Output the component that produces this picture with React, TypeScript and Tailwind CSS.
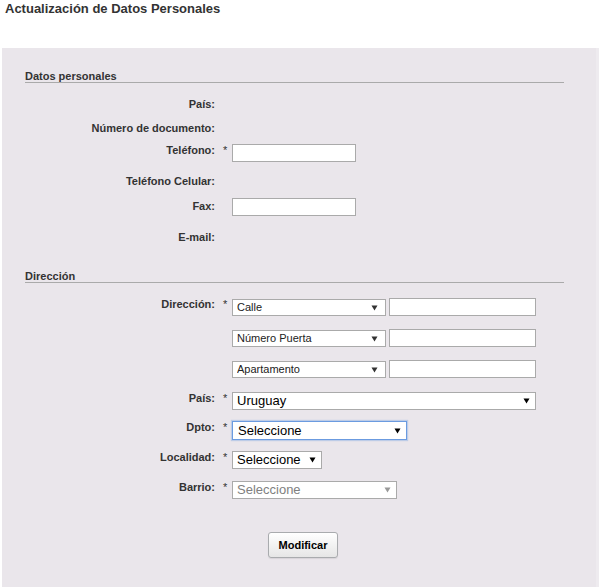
import React from 'react';

type RowProps = {
  label?: string;
  req?: boolean;
  className?: string;
  labelClass?: string;
  children?: React.ReactNode;
};

function Row({ label = '', req = false, className = '', labelClass = '', children }: RowProps) {
  return (
    <div className={`flex items-start ${className}`}>
      <div className={`w-[190px] text-right text-[11px] font-bold leading-[12px] ${labelClass}`}>{label}</div>
      <div className="w-[17px] pl-[8px] text-[11px] leading-[12px]">{req ? '*' : ''}</div>
      <div className="flex items-start gap-[3px]">{children}</div>
    </div>
  );
}

function Arrow({ className = '' }: { className?: string }) {
  return (
    <svg
      width="7"
      height="6"
      viewBox="0 0 7 6"
      className={`pointer-events-none absolute top-1/2 -translate-y-1/2 ${className}`}
    >
      <polygon points="0.5,0.5 6.5,0.5 3.5,5.5" fill="currentColor" />
    </svg>
  );
}

export default function App() {
  return (
    <div className="h-[587px] overflow-hidden bg-white font-['Liberation_Sans',Arial,sans-serif] text-[#333]">
      <h1 className="pl-[5px] pt-[1px] text-[13px] font-bold leading-[16px]">Actualización de Datos Personales</h1>

      <div className="ml-[2px] mt-[31px] h-[539px] w-[597px] border-r-[3px] border-r-[#eeebef] bg-[#eae6eb] pl-[23px] pt-[22px]">
        {/* Datos personales */}
        <div className="w-[539px] border-b border-[#aaa] text-[11px] font-bold leading-[12px]">Datos personales</div>

        <Row label="País:" className="mt-[15px]" />
        <Row label="Número de documento:" className="mt-[12px]" />
        <Row label="Teléfono:" req className="mt-[10px]">
          <input type="text" className="block h-[18px] w-[124px] border border-[#aaa] bg-white" />
        </Row>
        <Row label="Teléfono Celular:" className="mt-[13px]" />
        <Row label="Fax:" className="mt-[11px]" labelClass="pt-[2px]">
          <input type="text" className="block h-[18px] w-[124px] border border-[#aaa] bg-white" />
        </Row>
        <Row label="E-mail:" className="mt-[15px]" />

        {/* Direccion */}
        <div className="mt-[27px] w-[539px] border-b border-[#aaa] text-[11px] font-bold leading-[12px]">Dirección</div>

        <Row label="Dirección:" req className="mt-[15px]">
          <div className="relative mt-px h-[17px] w-[154px] text-[#222]">
            <select className="block h-full w-full appearance-none border border-[#aaa] bg-white pl-[4px] text-[11px] leading-[15px]">
              <option>Calle</option>
            </select>
            <Arrow className="right-[8px] text-[#333]" />
          </div>
          <input type="text" className="block h-[18px] w-[147px] border border-[#aaa] bg-white" />
        </Row>
        <Row className="mt-[13px]">
          <div className="relative mt-px h-[17px] w-[154px] text-[#222]">
            <select className="block h-full w-full appearance-none border border-[#aaa] bg-white pl-[4px] text-[11px] leading-[15px]">
              <option>Número Puerta</option>
            </select>
            <Arrow className="right-[8px] text-[#333]" />
          </div>
          <input type="text" className="block h-[18px] w-[147px] border border-[#aaa] bg-white" />
        </Row>
        <Row className="mt-[13px]">
          <div className="relative mt-px h-[17px] w-[154px] text-[#222]">
            <select className="block h-full w-full appearance-none border border-[#aaa] bg-white pl-[4px] text-[11px] leading-[15px]">
              <option>Apartamento</option>
            </select>
            <Arrow className="right-[8px] text-[#333]" />
          </div>
          <input type="text" className="block h-[18px] w-[147px] border border-[#aaa] bg-white" />
        </Row>

        <Row label="País:" req className="mt-[14px]">
          <div className="relative h-[18px] w-[304px] text-black">
            <select className="block h-full w-full appearance-none border border-[#aaa] bg-white pl-[4px] text-[13px] leading-[16px]">
              <option>Uruguay</option>
            </select>
            <Arrow className="right-[6px]" />
          </div>
        </Row>
        <Row label="Dpto:" req className="mt-[11px]">
          <div className="relative h-[19px] w-[175px] text-black">
            <select className="block h-full w-full appearance-none border border-[#6b9be0] bg-white pl-[5px] text-[13px] leading-[17px] shadow-[0_0_1px_1px_rgba(107,155,224,0.35)]">
              <option>Seleccione</option>
            </select>
            <Arrow className="right-[6px]" />
          </div>
        </Row>
        <Row label="Localidad:" req className="mt-[11px]">
          <div className="relative h-[18px] w-[90px] text-black">
            <select className="block h-full w-full appearance-none border border-[#aaa] bg-white pl-[4px] text-[13px] leading-[16px]">
              <option>Seleccione</option>
            </select>
            <Arrow className="right-[6px]" />
          </div>
        </Row>
        <Row label="Barrio:" req className="mt-[12px]">
          <div className="relative h-[18px] w-[165px] text-[#808080]">
            <select
              disabled
              className="block h-full w-full appearance-none border border-[#aaa] bg-white pl-[4px] text-[13px] leading-[16px]"
            >
              <option>Seleccione</option>
            </select>
            <Arrow className="right-[6px] text-[#999]" />
          </div>
        </Row>

        <div className="mt-[33px] pl-[243px]">
          <button
            type="button"
            className="h-[26px] w-[70px] rounded-[3px] border border-[#a9abae] bg-linear-to-b from-white to-[#e6e6e6] text-[11px] font-bold text-black shadow-[0_1px_1px_rgba(0,0,0,0.08)]"
          >
            Modificar
          </button>
        </div>
      </div>
    </div>
  );
}
